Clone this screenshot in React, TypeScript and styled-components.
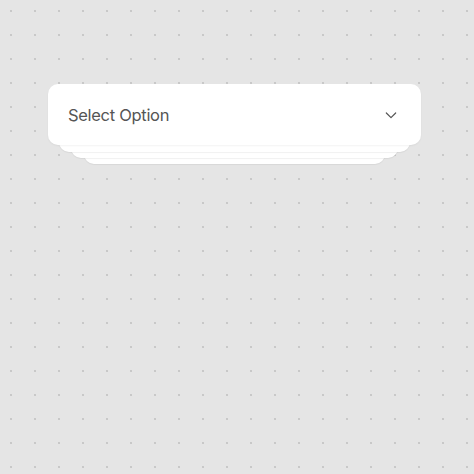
import React from "react";
import styled, { createGlobalStyle } from "styled-components";

const Global = createGlobalStyle`
  html, body { margin: 0; padding: 0; }
  body {
    width: 474px;
    height: 474px;
    background-color: #e5e5e5;
    background-image: radial-gradient(circle, #c8c8c8 0.7px, transparent 1.1px);
    background-size: 24px 24px;
    background-position: -1px -1px;
    font-family: "Inter", "Open Sans", sans-serif;
    overflow: hidden;
  }
`;

const Page = styled.div`
  padding: 84px 53px 0 48px;
`;

const Stack = styled.div`
  position: relative;
  width: 373px;
`;

const Card = styled.button`
  position: relative;
  z-index: 4;
  display: flex;
  align-items: center;
  justify-content: space-between;
  width: 100%;
  height: 61px;
  padding: 1px 22px 0 20px;
  border: none;
  border-radius: 10px;
  background: #ffffff;
  box-shadow: 0 1px 2px rgba(0, 0, 0, 0.05);
  font-family: inherit;
  cursor: pointer;
`;

const Label = styled.span`
  font-size: 16.5px;
  color: #555555;
  letter-spacing: -0.3px;
`;

const Layer = styled.div<{ $inset: number; $bottom: number; $z: number }>`
  position: absolute;
  left: ${(p) => p.$inset}px;
  right: ${(p) => p.$inset}px;
  top: 20px;
  bottom: ${(p) => -p.$bottom}px;
  z-index: ${(p) => p.$z};
  background: #ffffff;
  border-radius: 10px;
  box-shadow: 0 1px 1px rgba(0, 0, 0, 0.06);
`;

const Chevron = () => (
  <svg width="16" height="16" viewBox="0 0 24 24" fill="none" stroke="#555" strokeWidth="1.8" strokeLinecap="round" strokeLinejoin="round">
    <path d="M5 9l7 7 7-7" />
  </svg>
);

export default function App() {
  return (
    <>
      <Global />
      <Page>
        <Stack>
          <Card>
            <Label>Select Option</Label>
            <Chevron />
          </Card>
          <Layer $inset={11} $bottom={7} $z={3} />
          <Layer $inset={23} $bottom={13} $z={2} />
          <Layer $inset={36} $bottom={19} $z={1} />
        </Stack>
      </Page>
    </>
  );
}
